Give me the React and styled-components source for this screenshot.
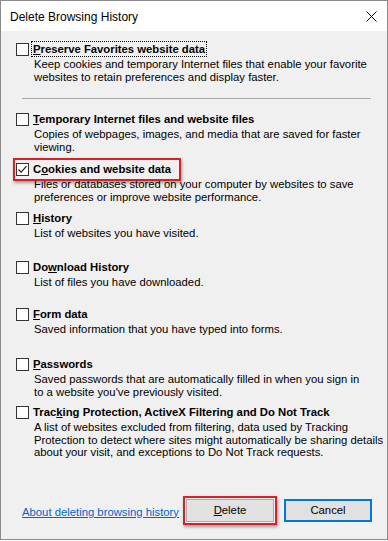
import React from "react";
import styled, { createGlobalStyle } from "styled-components";

const Global = createGlobalStyle`
  html, body { margin: 0; padding: 0; background: #ffffff; }
  body { font-family: "Liberation Sans", Arial, sans-serif; }
`;

const Window = styled.div`
  width: 388px;
  height: 540px;
  box-sizing: border-box;
  border: 1px solid #8a8a8a;
  background: #f0f0f0;
  display: flex;
  flex-direction: column;
  overflow: hidden;
`;

const TitleBar = styled.div`
  height: 30px;
  background: #ffffff;
  display: flex;
  align-items: center;
  justify-content: space-between;
  padding: 0 9px 0 9px;
  flex-shrink: 0;
`;

const Title = styled.div`
  font-family: "Liberation Sans", Arial, sans-serif;
  font-size: 12px;
  color: #000;
  margin-top: 1px;
`;

const Close = styled.svg`
  width: 11px;
  height: 11px;
  margin-right: 1px;
`;

const Body = styled.div`
  flex: 1;
  display: flex;
  flex-direction: column;
  padding: 10px 15px 0 15px;
  font-family: "Liberation Sans", Arial, sans-serif;
  font-size: 11.3px;
  color: #000;
`;

const Item = styled.div`
  position: relative;
  height: ${(p) => p.$h}px;
  flex-shrink: 0;
`;

const Head = styled.div`
  display: flex;
  align-items: center;
  height: 16px;
`;

const Box = styled.div`
  width: 13px;
  height: 13px;
  box-sizing: border-box;
  border: 1px solid #333333;
  background: #ffffff;
  position: relative;
  flex-shrink: 0;
`;

const Label = styled.span`
  font-weight: bold;
  margin-left: 2px;
  padding: 0 1px;
  line-height: 14px;
  white-space: nowrap;
  border: 1px dotted ${(p) => (p.$focus ? "#000" : "transparent")};
`;

const U = styled.span`
  text-decoration: underline;
  text-underline-offset: 1px;
`;

const Desc = styled.div`
  padding-left: 18px;
  line-height: 12.6px;
  margin-top: 1px;
  white-space: pre;
`;

const Highlight = styled.div`
  position: absolute;
  left: -3px;
  top: -3px;
  width: 168px;
  height: 23px;
  box-sizing: border-box;
  border: 2px solid #dc1f26;
  box-shadow: 1px 2px 3px rgba(0, 0, 0, 0.35);
  pointer-events: none;
`;

const Separator = styled.div`
  height: 1px;
  background: #a8a8a8;
  margin: 15px 1px 12px 6px;
  flex-shrink: 0;
`;

const Footer = styled.div`
  margin-top: auto;
  display: flex;
  align-items: center;
  padding: 0 0 16px 6px;
  height: 26px;
`;

const Link = styled.a`
  color: #0066cc;
  text-decoration: underline;
  flex: 1;
  min-width: 0;
  cursor: pointer;
  margin-top: 3px;
  white-space: nowrap;
`;

const BtnWrap = styled.div`
  position: relative;
  margin-right: ${(p) => p.$mr || 0}px;
  display: flex;
  flex-shrink: 0;
`;

const Button = styled.button`
  width: 88px;
  height: 23px;
  box-sizing: border-box;
  font-family: "Liberation Sans", Arial, sans-serif;
  font-size: 11.3px;
  color: #000;
  background: #e1e1e1;
  border: ${(p) => (p.$default ? "2px solid #0078d7" : "1px solid #adadad")};
  padding: 0;
`;

const ButtonMark = styled.div`
  position: absolute;
  left: -3px;
  top: -3px;
  right: -3px;
  bottom: -3px;
  border: 2px solid #dc1f26;
  box-shadow: 1px 2px 3px rgba(0, 0, 0, 0.35);
  pointer-events: none;
`;

function Check({ checked }) {
  return (
    <Box>
      {checked && (
        <svg width="11" height="11" viewBox="0 0 11 11" style={{ position: "absolute", left: 0, top: 0 }}>
          <path d="M1.5 5.5 L4.2 8.2 L9.5 2.2" fill="none" stroke="#222" strokeWidth="1.2" />
        </svg>
      )}
    </Box>
  );
}

function Entry({ h, label, desc, checked, focus, mark }) {
  return (
    <Item $h={h}>
      {mark && <Highlight />}
      <Head>
        <Check checked={checked} />
        <Label $focus={focus}>{label}</Label>
      </Head>
      <Desc>{desc}</Desc>
    </Item>
  );
}

export default function App() {
  return (
    <>
      <Global />
      <Window>
        <TitleBar>
          <Title>Delete Browsing History</Title>
          <Close viewBox="0 0 11 11">
            <path d="M0.5 0.5 L10.5 10.5 M10.5 0.5 L0.5 10.5" stroke="#000" strokeWidth="1" />
          </Close>
        </TitleBar>
        <Body>
          <Entry
            h={42}
            focus
            label={<><U>P</U>reserve Favorites website data</>}
            desc={"Keep cookies and temporary Internet files that enable your favorite\nwebsites to retain preferences and display faster."}
          />
          <Separator />
          <Entry
            h={50}
            label={<><U>T</U>emporary Internet files and website files</>}
            desc={"Copies of webpages, images, and media that are saved for faster\nviewing."}
          />
          <Entry
            h={49}
            checked
            mark
            label={<>C<U>o</U>okies and website data</>}
            desc={"Files or databases stored on your computer by websites to save\npreferences or improve website performance."}
          />
          <Entry
            h={49}
            label={<><U>H</U>istory</>}
            desc={"List of websites you have visited."}
          />
          <Entry
            h={47}
            label={<>Do<U>w</U>nload History</>}
            desc={"List of files you have downloaded."}
          />
          <Entry
            h={50}
            label={<><U>F</U>orm data</>}
            desc={"Saved information that you have typed into forms."}
          />
          <Entry
            h={48}
            label={<><U>P</U>asswords</>}
            desc={"Saved passwords that are automatically filled in when you sign in\nto a website you've previously visited."}
          />
          <Entry
            h={56}
            label={<>Trac<U>k</U>ing Protection, ActiveX Filtering and Do Not Track</>}
            desc={"A list of websites excluded from filtering, data used by Tracking\nProtection to detect where sites might automatically be sharing details\nabout your visit, and exceptions to Do Not Track requests."}
          />
          <Footer>
            <Link>About deleting browsing history</Link>
            <BtnWrap $mr={10}>
              <ButtonMark />
              <Button><U>D</U>elete</Button>
            </BtnWrap>
            <BtnWrap>
              <Button $default>Cancel</Button>
            </BtnWrap>
          </Footer>
        </Body>
      </Window>
    </>
  );
}
